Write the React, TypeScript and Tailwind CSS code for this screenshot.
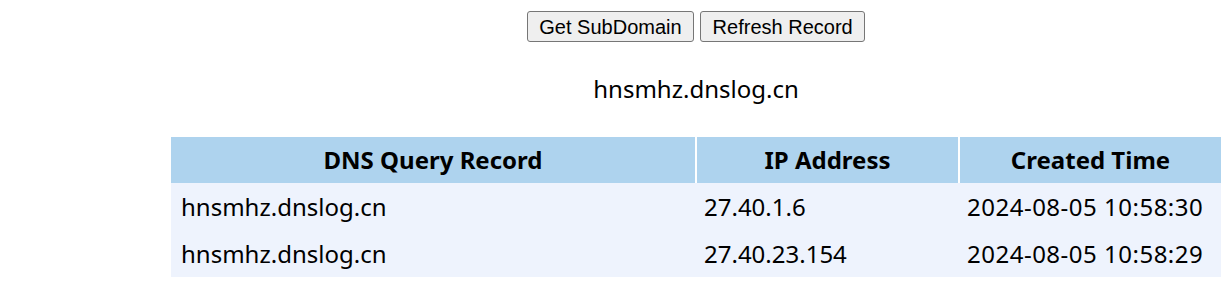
export default function App() {
  const rows = [
    ["hnsmhz.dnslog.cn", "27.40.1.6", "2024-08-05 10:58:30"],
    ["hnsmhz.dnslog.cn", "27.40.23.154", "2024-08-05 10:58:29"],
  ];
  return (
    <div className="w-[1230px] h-[288px] bg-white text-black">
      <div className="ml-[171px] w-[1050px] pt-[11px]">
        <div className="flex justify-center gap-[6px] font-['Liberation_Sans',Arial,sans-serif] text-[20px]">
          <button className="h-[31px] px-[11.5px] border border-[#767676] rounded-[3px] bg-[#efefef] leading-none">Get SubDomain</button>
          <button className="h-[31px] px-[11.5px] border border-[#767676] rounded-[3px] bg-[#efefef] leading-none">Refresh Record</button>
        </div>
        <div className="mt-[31px] text-center text-[24px] leading-[32px] font-['Noto_Sans','Open_Sans',sans-serif]">hnsmhz.dnslog.cn</div>
        <table className="mt-[31px] w-full border-separate border-spacing-0 font-['Noto_Sans','Open_Sans',sans-serif] text-[24px] bg-[#eef3fd] border-t border-white">
          <thead>
            <tr className="bg-[#aed3ee]">
              <th className="w-[524px] h-[46px] font-bold text-center p-0">DNS Query Record</th>
              <th className="w-[263px] h-[46px] font-bold text-center p-0 border-l-2 border-white">IP Address</th>
              <th className="h-[46px] font-bold text-center p-0 border-l-2 border-white">Created Time</th>
            </tr>
          </thead>
          <tbody>
            {rows.map((r, i) => (
              <tr key={i}>
                {r.map((c, j) => (
                  <td key={j} className={`h-[47px] text-left p-0 ${j === 0 ? "pl-[10px]" : "pl-[9px]"} ${j === 2 ? "tracking-[0.5px]" : ""}`}>{c}</td>
                ))}
              </tr>
            ))}
          </tbody>
        </table>
      </div>
    </div>
  );
}
